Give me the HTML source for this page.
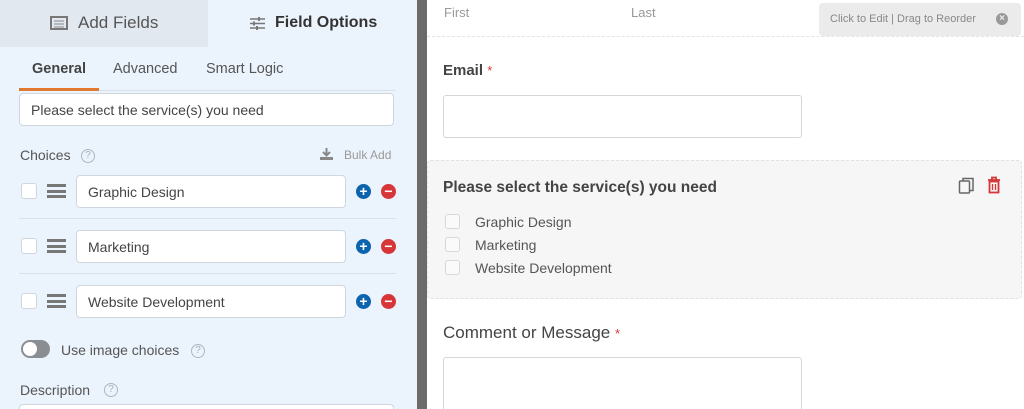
<!DOCTYPE html>
<html style="width:1024px;height:409px;overflow:hidden"><head><style>
*{box-sizing:border-box;margin:0;padding:0}
html,body{width:1024px;height:409px;overflow:hidden}
body{font-family:"Liberation Sans",sans-serif;background:#fff;position:relative;color:#444}
.a{position:absolute}
.left{left:0;top:0;width:417px;height:409px;background:#ebf3fc}
.bar{left:417px;top:0;width:10px;height:409px;background:#6b6b6b}
.inp{background:#fff;border:1px solid #cfd6de;border-radius:4px;font-size:14px;color:#444;padding-left:11px;display:flex;align-items:center}
.cb{width:16px;height:16px;border:1px solid #cfd6de;border-radius:3px;background:#fff}
.ham{width:19px;height:14px;border-top:3px solid #777;border-bottom:3px solid #777}
.ham:after{content:"";position:absolute;left:0;top:2.5px;width:19px;height:3px;background:#777}
.circ{width:15px;height:15px;border-radius:50%;color:#fff;font-size:14px;font-weight:bold;line-height:15px;text-align:center}
.q{width:14px;height:14px;border:1px solid #b0b6bd;border-radius:50%;font-size:10px;color:#aab;text-align:center;line-height:12px}
.sep{height:1px;background:#d9e0e8}
.lbl{font-size:15px;color:#444}
.star{color:#d63638;font-size:13px;font-weight:normal}
.rc{width:15px;height:15px;border:1px solid #d5d8dc;border-radius:3px;background:#fafafa}
</style></head><body>
<div class="a left"></div>
<div class="a" style="left:0;top:0;width:208px;height:47px;background:#e1e8f0"></div>
<div class="a" style="left:208px;top:0;width:209px;height:47px;background:#ebf3fc"></div>
<svg class="a" style="left:50px;top:16px" width="18" height="14"><rect x="1" y="1" width="16" height="12" fill="none" stroke="#777" stroke-width="2"/><path d="M4 5h10M4 8h10M4 11h10" stroke="#888"/></svg>
<div class="a" style="left:78px;top:13px;font-size:17px;color:#555">Add Fields</div>
<svg class="a" style="left:249px;top:16px" width="17" height="15"><path d="M1 3h15M1 7.5h15M1 12h15" stroke="#777" stroke-width="1.5"/><rect x="9" y="1" width="2" height="4" fill="#777"/><rect x="4" y="5.5" width="2" height="4" fill="#777"/><rect x="7" y="10" width="2" height="4" fill="#777"/></svg>
<div class="a" style="left:275px;top:14px;font-size:16px;color:#333;font-weight:bold">Field Options</div>
<div class="a" style="left:32px;top:61px;font-size:14.5px;color:#444;font-weight:bold">General</div>
<div class="a" style="left:113px;top:61px;font-size:14.5px;color:#555">Advanced</div>
<div class="a" style="left:206px;top:61px;font-size:14.5px;color:#555">Smart Logic</div>
<div class="a" style="left:19px;top:90px;width:377px;height:1px;background:#d9e0e8"></div>
<div class="a" style="left:19px;top:88px;width:80px;height:3px;background:#e27730"></div>
<div class="a inp" style="left:19px;top:93px;width:375px;height:33px">Please select the service(s) you need</div>
<div class="a" style="left:20px;top:147px;font-size:14px;color:#555">Choices</div>
<div class="a q" style="left:81px;top:149px">?</div>
<svg class="a" style="left:319px;top:147px" width="15" height="14"><path d="M7.5 1v7M4 5l3.5 3.5L11 5" stroke="#888" stroke-width="2" fill="none"/><rect x="1" y="10" width="13" height="3" fill="#888"/></svg>
<div class="a" style="left:344px;top:148px;font-size:12px;color:#999">Bulk Add</div>

<div class="a cb" style="left:21px;top:183px"></div><div class="a ham" style="left:47px;top:184px"></div>
<div class="a inp" style="left:76px;top:175px;width:270px;height:33px">Graphic Design</div>
<div class="a circ" style="left:356px;top:184px;background:#0b64ad">+</div><div class="a circ" style="left:381px;top:184px;background:#d63638">−</div>
<div class="a sep" style="left:19px;top:218px;width:377px"></div>
<div class="a cb" style="left:21px;top:238px"></div><div class="a ham" style="left:47px;top:239px"></div>
<div class="a inp" style="left:76px;top:230px;width:270px;height:33px">Marketing</div>
<div class="a circ" style="left:356px;top:239px;background:#0b64ad">+</div><div class="a circ" style="left:381px;top:239px;background:#d63638">−</div>
<div class="a sep" style="left:19px;top:273px;width:377px"></div>
<div class="a cb" style="left:21px;top:293px"></div><div class="a ham" style="left:47px;top:294px"></div>
<div class="a inp" style="left:76px;top:285px;width:270px;height:33px">Website Development</div>
<div class="a circ" style="left:356px;top:294px;background:#0b64ad">+</div><div class="a circ" style="left:381px;top:294px;background:#d63638">−</div>

<div class="a" style="left:21px;top:340px;width:29px;height:18px;border-radius:9px;background:#8a8e93"></div>
<div class="a" style="left:23px;top:342px;width:14px;height:14px;border-radius:50%;background:#fff"></div>
<div class="a" style="left:61px;top:342px;font-size:14px;color:#555">Use image choices</div>
<div class="a q" style="left:191px;top:344px">?</div>
<div class="a" style="left:20px;top:382px;font-size:14px;color:#555">Description</div>
<div class="a q" style="left:104px;top:383px">?</div>
<div class="a" style="left:19px;top:404px;width:375px;height:5px;background:#fff;border:1px solid #cfd6de;border-bottom:none;border-radius:4px 4px 0 0"></div>

<div class="a bar"></div>

<div class="a" style="left:427px;top:36px;width:597px;border-top:1px dashed #e4e4e4"></div>
<div class="a" style="left:444px;top:5px;font-size:13px;color:#999">First</div>
<div class="a" style="left:631px;top:5px;font-size:13px;color:#999">Last</div>
<div class="a" style="left:819px;top:3px;width:202px;height:33px;background:#ebebeb;border-radius:4px"></div>
<div class="a" style="left:830px;top:13px;font-size:11px;color:#888">Click to Edit | Drag to Reorder</div>
<div class="a" style="left:996px;top:13px;width:12px;height:12px;border-radius:50%;background:#999;color:#ebebeb;font-size:10px;line-height:12px;text-align:center;font-weight:bold">×</div>

<div class="a lbl" style="left:443px;top:62px;font-weight:bold;color:#444">Email <span class="star">*</span></div>
<div class="a" style="left:443px;top:95px;width:359px;height:43px;border:1px solid #d6d6d6;border-radius:3px"></div>

<div class="a" style="left:427px;top:160px;width:595px;height:139px;background:#f6f6f6;border:1px dashed #e2e2e2;border-radius:4px"></div>
<div class="a lbl" style="left:443px;top:179px;font-weight:bold;color:#444;font-size:15.5px">Please select the service(s) you need</div>
<svg class="a" style="left:958px;top:177px" width="18" height="18"><rect x="1.5" y="4" width="10" height="12" rx="1" fill="none" stroke="#666" stroke-width="1.5"/><path d="M5 4V1.5h10v12h-3.5" fill="none" stroke="#666" stroke-width="1.5"/></svg>
<svg class="a" style="left:987px;top:176px" width="14" height="18"><path d="M1 4h12M5 4V1.5h4V4" stroke="#d63638" stroke-width="1.8" fill="none"/><rect x="2.5" y="5.5" width="9" height="11" fill="none" stroke="#d63638" stroke-width="1.8"/><path d="M5.5 8v6M8.5 8v6" stroke="#d63638" stroke-width="1.3"/></svg>
<div class="a rc" style="left:445px;top:214px"></div><div class="a" style="left:475px;top:214px;font-size:14px;color:#555">Graphic Design</div>
<div class="a rc" style="left:445px;top:237px"></div><div class="a" style="left:475px;top:237px;font-size:14px;color:#555">Marketing</div>
<div class="a rc" style="left:445px;top:260px"></div><div class="a" style="left:475px;top:260px;font-size:14px;color:#555">Website Development</div>

<div class="a lbl" style="left:443px;top:323px;color:#444;font-size:17px">Comment or Message <span class="star">*</span></div>
<div class="a" style="left:443px;top:357px;width:359px;height:60px;border:1px solid #d6d6d6;border-radius:3px"></div>
</body></html>
